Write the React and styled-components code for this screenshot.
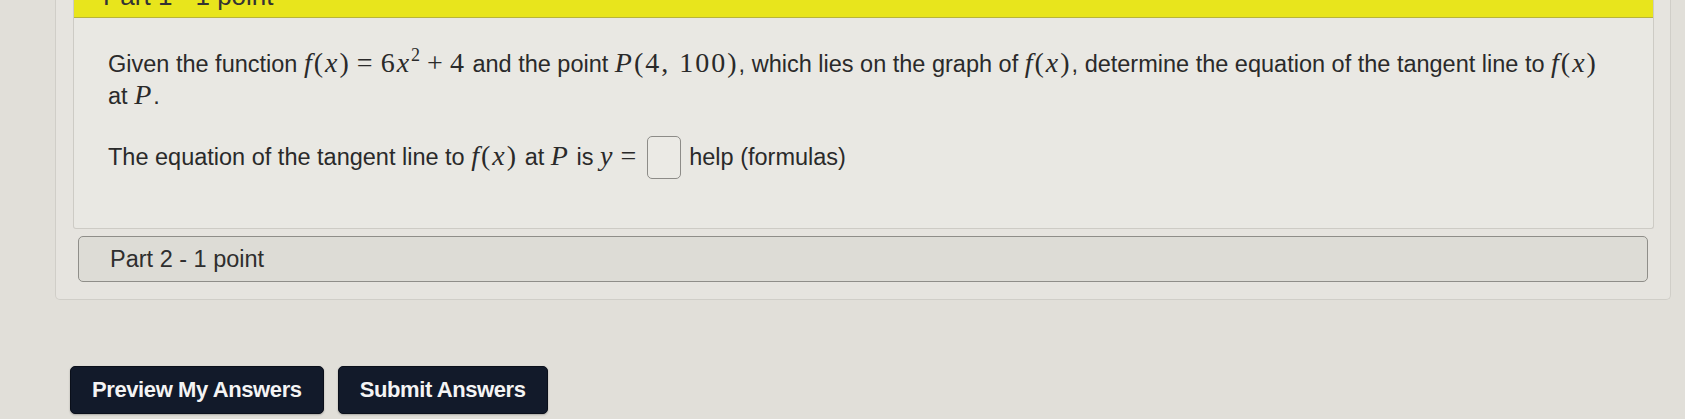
import React from "react";
import styled, { createGlobalStyle } from "styled-components";

const Global = createGlobalStyle`
  html, body { margin: 0; padding: 0; }
  body {
    background: #e1dfd9;
    font-family: "Liberation Sans", Arial, sans-serif;
    color: #2a2a2a;
    overflow: hidden;
  }
`;

const Page = styled.div`
  width: 1685px;
  height: 419px;
  overflow: hidden;
`;

const Shift = styled.div`
  margin-top: -28px;
  padding-left: 55px;
`;

const OuterPanel = styled.div`
  width: 1581px;
  padding: 0 16px 17px 17px;
  background: #e6e4df;
  border: 1px solid #d0cec8;
  border-top: none;
  border-radius: 0 0 5px 5px;
`;

const QuestionPanel = styled.section`
  background: #e9e8e3;
  border: 1px solid #cdcbc5;
  border-top: none;
  border-radius: 0 0 3px 3px;
`;

const PartHeader = styled.div`
  height: 46px;
  box-sizing: border-box;
  background: #e8e51c;
  border-bottom: 1px solid #b8b43a;
  padding: 11px 0 0 29px;
  font-size: 26px;
  line-height: 26px;
  color: #333;
`;

const Body = styled.div`
  padding: 30px 34px 55px 34px;
  font-size: 23.5px;
  line-height: 32px;
`;

const Para = styled.p`
  margin: 0 0 ${(p) => p.$gap || 0}px 0;
`;

const Math = styled.span`
  font-family: "Liberation Serif", "Times New Roman", serif;
  font-size: 28px;
  line-height: 1;
  letter-spacing: 2px;
  white-space: nowrap;
`;

const V = styled.i`
  font-style: italic;
`;

const Op = styled.span`
  margin: 0 ${(p) => p.$space || 5}px;
`;

const Sup = styled.sup`
  font-size: 18px;
  vertical-align: 11px;
  line-height: 0;
`;

const AnswerBox = styled.span`
  display: inline-block;
  width: 34px;
  height: 43px;
  box-sizing: border-box;
  border: 1.5px solid #8d8c88;
  border-radius: 5px;
  background: #ebeae5;
  vertical-align: middle;
  margin: -10px 8px -8px 3px;
`;

const CollapsedPart = styled.div`
  margin: 7px 6px 0 5px;
  height: 46px;
  box-sizing: border-box;
  border: 1.5px solid #8f8e89;
  border-radius: 5px;
  background: #dddcd6;
  display: flex;
  align-items: center;
  padding-left: 31px;
  font-size: 23.5px;
  color: #2e2e2e;
`;

const Actions = styled.div`
  display: flex;
  gap: 14px;
  margin: 66px 0 0 15px;
`;

const Button = styled.button`
  height: 48px;
  padding: 0 21px;
  background: #121a2a;
  color: #f4f4f4;
  border: 1px solid #0a0f1a;
  border-radius: 5px;
  font-family: "Liberation Sans", Arial, sans-serif;
  font-weight: 700;
  font-size: 22px;
  letter-spacing: -0.4px;
  box-shadow: 0 1px 2px rgba(0, 0, 0, 0.25);
  cursor: pointer;
`;

export default function App() {
  return (
    <Page>
      <Global />
      <Shift>
        <OuterPanel>
          <QuestionPanel>
            <PartHeader>Part 1 - 1 point</PartHeader>
            <Body>
              <Para $gap={29}>
                Given the function{" "}
                <Math>
                  <V>f</V>(<V>x</V>)<Op $space={6}>=</Op>6<V>x</V>
                  <Sup>2</Sup>
                  <Op>+</Op>4
                </Math>{" "}
                and the point{" "}
                <Math>
                  <V>P</V>(4, 100)
                </Math>
                , which lies on the graph of{" "}
                <Math>
                  <V>f</V>(<V>x</V>)
                </Math>
                , determine the equation of the tangent line to{" "}
                <Math>
                  <V>f</V>(<V>x</V>)
                </Math>{" "}
                at{" "}
                <Math>
                  <V>P</V>
                </Math>
                .
              </Para>
              <Para>
                The equation of the tangent line to{" "}
                <Math>
                  <V>f</V>(<V>x</V>)
                </Math>{" "}
                at{" "}
                <Math>
                  <V>P</V>
                </Math>{" "}
                is{" "}
                <Math>
                  <V>y</V>
                  <Op $space={6}>=</Op>
                </Math>
                <AnswerBox />
                help (formulas)
              </Para>
            </Body>
          </QuestionPanel>
          <CollapsedPart>Part 2 - 1 point</CollapsedPart>
        </OuterPanel>
        <Actions>
          <Button>Preview My Answers</Button>
          <Button>Submit Answers</Button>
        </Actions>
      </Shift>
    </Page>
  );
}
